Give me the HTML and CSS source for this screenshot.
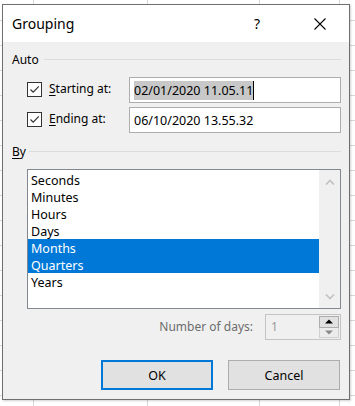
FILE: index.html
```html
<!DOCTYPE html>
<html lang="en">
<head>
    <meta charset="UTF-8">
    <title>Grouping</title>
    <link rel="stylesheet" href="styles.css">
</head>
<body>
    <div class="dialog">
        <div class="titlebar">
            <span class="title">Grouping</span>
            <span class="help">?</span>
            <span class="close">
                <svg width="12" height="12" viewBox="0 0 12 12">
                    <path d="M0.5 0.5 L11.5 11.5 M11.5 0.5 L0.5 11.5" stroke="#000" stroke-width="1.1" fill="none"/>
                </svg>
            </span>
        </div>

        <div class="content">
            <div class="group-head">
                <span class="group-label">Auto</span>
                <span class="group-line"></span>
            </div>

            <div class="field-row">
                <label class="check">
                    <span class="check-box">
                        <svg width="13" height="13" viewBox="0 0 13 13">
                            <path d="M2.5 6.5 L5.2 9.2 L10.8 3.4" stroke="#333" stroke-width="1.2" fill="none"/>
                        </svg>
                    </span>
                    <span class="check-text"><u>S</u>tarting at:</span>
                </label>
                <div class="text-input"><span class="selected">02/01/2020 11.05.11</span><span class="caret"></span></div>
            </div>

            <div class="field-row second">
                <label class="check">
                    <span class="check-box">
                        <svg width="13" height="13" viewBox="0 0 13 13">
                            <path d="M2.5 6.5 L5.2 9.2 L10.8 3.4" stroke="#333" stroke-width="1.2" fill="none"/>
                        </svg>
                    </span>
                    <span class="check-text"><u>E</u>nding at:</span>
                </label>
                <div class="text-input">06/10/2020 13.55.32</div>
            </div>

            <div class="group-head by">
                <span class="group-label"><u>B</u>y</span>
                <span class="group-line"></span>
            </div>

            <div class="listbox">
                <ul class="items">
                    <li>Seconds</li>
                    <li>Minutes</li>
                    <li>Hours</li>
                    <li>Days</li>
                    <li class="active">Months</li>
                    <li class="active">Quarters</li>
                    <li>Years</li>
                </ul>
                <div class="scrollbar">
                    <svg width="10" height="6" viewBox="0 0 10 6">
                        <path d="M1 5.5 L5 1.5 L9 5.5" stroke="#c2c2c2" stroke-width="1.6" fill="none"/>
                    </svg>
                    <svg width="10" height="6" viewBox="0 0 10 6">
                        <path d="M1 0.5 L5 4.5 L9 0.5" stroke="#c2c2c2" stroke-width="1.6" fill="none"/>
                    </svg>
                </div>
            </div>

            <div class="days-row">
                <span class="days-label">Number of days:</span>
                <div class="spinner">
                    <span class="spin-value">1</span>
                    <div class="spin-buttons">
                        <span class="spin up">
                            <svg width="8" height="5" viewBox="0 0 8 5"><path d="M0 4.5 L4 0.5 L8 4.5 Z" fill="#000"/></svg>
                        </span>
                        <span class="spin down">
                            <svg width="8" height="5" viewBox="0 0 8 5"><path d="M0 0.5 L4 4.5 L8 0.5 Z" fill="#8a8a8a"/></svg>
                        </span>
                    </div>
                </div>
            </div>

            <div class="buttons">
                <button class="btn default">OK</button>
                <button class="btn">Cancel</button>
            </div>
        </div>
    </div>
</body>
</html>
```

FILE: styles.css
```css
* {
    margin: 0;
    padding: 0;
    box-sizing: border-box;
}

body {
    width: 355px;
    height: 406px;
    overflow: hidden;
    font-family: 'Noto Sans', 'Open Sans', sans-serif;
    font-size: 12px;
    color: #000;
    background-color: #fff;
    background-image:
        linear-gradient(to right, transparent 33px, #d8d8d8 33px, #d8d8d8 34px, transparent 34px,
            transparent 147px, #d8d8d8 147px, #d8d8d8 148px, transparent 148px,
            transparent 259px, #d8d8d8 259px, #d8d8d8 260px, transparent 260px,
            transparent 339px, #d8d8d8 339px, #d8d8d8 340px, transparent 340px),
        repeating-linear-gradient(to bottom, transparent 0, transparent 20px, #d8d8d8 20px, #d8d8d8 21px, transparent 21px, transparent 25px);
    padding: 4px 0 0 2px;
}

.dialog {
    width: 348px;
    height: 396px;
    background: #f0f0f0;
    border: 1px solid #6f6f6f;
    box-shadow: 1px 1px 2px rgba(0, 0, 0, 0.18);
    display: flex;
    flex-direction: column;
}

/* title bar */
.titlebar {
    height: 37px;
    background: #fff;
    display: flex;
    align-items: center;
    padding-left: 9px;
}

.title {
    font-size: 14px;
    flex: 1;
    margin-top: -1px;
}

.help {
    font-size: 14px;
    width: 10px;
    margin-right: 50px;
    margin-top: -1px;
}

.close {
    width: 12px;
    height: 12px;
    display: flex;
    margin-right: 23px;
}

/* body */
.content {
    flex: 1;
    padding: 0 8px 0 9px;
    display: flex;
    flex-direction: column;
}

.group-head {
    height: 16px;
    margin-top: 10px;
    display: flex;
    align-items: center;
}

.group-head.by {
    margin-top: 11px;
}

.group-label {
    line-height: 16px;
    margin-top: -1px;
}

.group-line {
    flex: 1;
    height: 1px;
    background: #dcdcdc;
    margin-left: 5px;
    margin-top: -1px;
}

.by .group-line {
    margin-left: 3px;
}

.field-row {
    margin-top: 9px;
    display: flex;
    align-items: flex-start;
    height: 26px;
}

.field-row.second {
    margin-top: 4px;
}

.check {
    width: 117px;
    padding-left: 15px;
    display: flex;
    align-items: center;
    margin-top: 4px;
}

.check-box {
    width: 15px;
    height: 15px;
    border: 1px solid #333;
    background: #fff;
    display: flex;
    align-items: center;
    justify-content: center;
}

.check-text {
    margin-left: 7px;
    margin-top: -1px;
}

.check-text u,
.group-label u {
    text-decoration-thickness: 1px;
    text-underline-offset: 2px;
}

.text-input {
    width: 212px;
    height: 26px;
    border: 1px solid #adadad;
    background: #fff;
    display: flex;
    align-items: center;
    padding-left: 4px;
    font-size: 12.5px;
}

.selected {
    background: #c8c8c8;
    line-height: 19px;
}

.caret {
    width: 1px;
    height: 19px;
    background: #000;
}

/* list box */
.listbox {
    margin-top: 9px;
    margin-left: 15px;
    width: 314px;
    height: 140px;
    border: 1px solid #828790;
    background: #fff;
    display: flex;
}

.items {
    list-style: none;
    flex: 1;
    padding-top: 1px;
}

.items li {
    height: 17px;
    line-height: 16px;
    padding-top: 2px;
    padding-left: 3px;
    font-size: 12.5px;
}

.items li.active {
    background: #0078d7;
    color: #fff;
}

.scrollbar {
    width: 21px;
    background: #f0f0f0;
    display: flex;
    flex-direction: column;
    justify-content: space-between;
    align-items: center;
    padding: 9px 0 8px;
}

/* number of days */
.days-row {
    margin-top: 5px;
    display: flex;
    justify-content: flex-end;
    align-items: center;
    height: 26px;
}

.days-label {
    color: #6d6d6d;
    margin-right: 12px;
    margin-top: -1px;
}

.spinner {
    width: 76px;
    height: 26px;
    border: 1px solid #c4c4c4;
    background: #f0f0f0;
    display: flex;
    padding: 1px 1px 1px 0;
}

.spin-value {
    flex: 1;
    color: #9a9a9a;
    padding-left: 5px;
    line-height: 22px;
}

.spin-buttons {
    width: 20px;
    display: flex;
    flex-direction: column;
}

.spin {
    flex: 1;
    display: flex;
    align-items: center;
    justify-content: center;
}

.spin.up {
    background: #e1e1e1;
    border: 1px solid #adadad;
}

.spin.down {
    background: #ececec;
    border: 1px solid #d0d0d0;
    border-top: none;
}

/* buttons */
.buttons {
    margin-top: 20px;
    display: flex;
    justify-content: flex-end;
    gap: 15px;
    padding-right: 1px;
}

.btn {
    width: 112px;
    height: 30px;
    background: #e1e1e1;
    border: 1px solid #adadad;
    font-family: 'Noto Sans', 'Open Sans', sans-serif;
    font-size: 12.5px;
    color: #000;
}

.btn.default {
    border: 2px solid #0078d7;
}
```
